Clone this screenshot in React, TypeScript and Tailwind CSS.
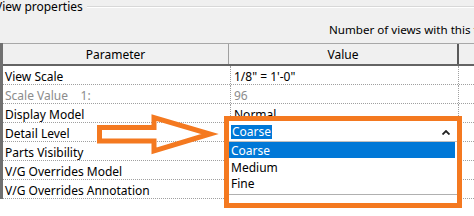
import React from "react";

const rows: { label: string; value: string; dim?: boolean }[] = [
  { label: "View Scale", value: "1/8\" = 1'-0\"" },
  { label: "Scale Value    1:", value: "96", dim: true },
  { label: "Display Model", value: "Normal" },
  { label: "Detail Level", value: "" },
  { label: "Parts Visibility", value: "" },
  { label: "V/G Overrides Model", value: "" },
  { label: "V/G Overrides Annotation", value: "" },
];

export default function App() {
  return (
    <div className="relative w-[474px] h-[216px] overflow-hidden bg-white text-[12px] text-black font-['Noto_Sans',sans-serif] leading-none">
      {/* top group area */}
      <div className="h-[43px] bg-[#f0f0f0] flex flex-col">
        <div className="flex items-center h-[13px]">
          <span className="-ml-[5px] whitespace-nowrap leading-[13px]">View properties</span>
          <div className="flex-1 ml-[4px] mt-[1px] border-t border-[#d8d8d8] border-b-white border-b" />
        </div>
        <div className="pl-[329px] pt-[10px] whitespace-nowrap leading-[13px] text-[11.6px]">
          Number of views with this template
        </div>
      </div>

      {/* table */}
      <div className="border-l-[3px] border-[#707070]">
        {/* header */}
        <div className="flex h-[23px] border-t border-t-[#a8a8a8] border-b-2 border-b-[#646464] bg-[#f0f0f0]">
          <div className="w-[225px] flex-none flex items-center justify-center pt-[2px]">Parameter</div>
          <div className="w-[229px] flex-none flex items-center justify-center pt-[2px] border-l border-[#a0a0a0]">Value</div>
          <div className="flex-1 border-l-2 border-[#5a5a5a]" />
        </div>
        {/* body */}
        {rows.map((r) => (
          <div key={r.label} className="flex h-[19px] border-b border-dotted border-[#a0a0a0] bg-white">
            <div
              className={`w-[227px] flex-none flex items-center pl-[2px] pt-[3px] whitespace-pre ${
                r.dim ? "text-[#8c8c8c]" : "text-black"
              }`}
            >
              {r.label}
            </div>
            <div
              className={`w-[228px] flex-none flex items-center pl-[3px] pt-[3px] border-l border-dotted border-[#a0a0a0] whitespace-pre ${
                r.dim ? "text-[#8c8c8c]" : "text-black"
              }`}
            >
              {r.value}
            </div>
            <div className="flex-1 border-l border-dotted border-[#a0a0a0]" />
          </div>
        ))}
      </div>

      {/* dropdown popup */}
      <div className="absolute left-[229px] top-[121px] w-[228px] bg-white flex flex-col">
        <div className="h-[21px] flex items-center justify-between pl-[2px] pr-[7px] pt-[2px] border-b border-[#c0c0c0]">
          <span className="bg-[#0078d7] text-white px-[1px] leading-[14px]">Coarse</span>
          <svg width="8" height="5" viewBox="0 0 8 5">
            <path d="M0.5 4.5 L4 1 L7.5 4.5" fill="none" stroke="#222" strokeWidth="1.8" />
          </svg>
        </div>
        <div className="h-[16px] bg-[#0078d7] text-white flex items-center pl-[2px] pt-[2px] mr-[2px]">Coarse</div>
        <div className="h-[16px] flex items-center pl-[2px] pt-[3px]">Medium</div>
        <div className="h-[16px] flex items-center pl-[2px] pt-[3px]">Fine</div>
        <div className="h-[5px] border-b border-[#b0b0b0]" />
        <div className="h-[7px]" />
      </div>

      {/* orange annotation box */}
      <div className="absolute left-[224px] top-[116px] w-[238px] h-[92px] border-[5px] border-[#f47920]" />

      {/* orange arrow */}
      <svg className="absolute left-0 top-0" width="474" height="216" viewBox="0 0 474 216">
        <polygon
          points="99.5,127.5 154,127.5 154,117.5 210,134 154,151 154,141 99.5,141"
          fill="none"
          stroke="#f47920"
          strokeWidth="5"
          strokeLinejoin="miter"
        />
      </svg>
    </div>
  );
}
